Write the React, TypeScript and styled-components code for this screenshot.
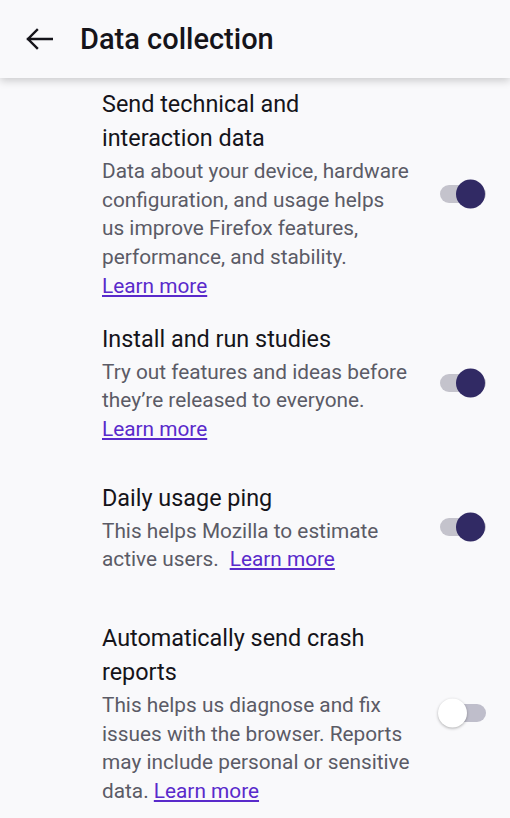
import { createGlobalStyle, styled } from "styled-components";

const Global = createGlobalStyle`
  html, body {
    margin: 0;
    padding: 0;
    background: #f9f9fb;
  }
  body {
    font-family: Roboto, "Noto Sans", sans-serif;
    color: #15141a;
  }
`;

const Screen = styled.div`
  width: 510px;
  min-height: 818px;
  background: #f9f9fb;
  display: flex;
  flex-direction: column;
`;

const Toolbar = styled.header`
  height: 78px;
  display: flex;
  align-items: center;
  gap: 27px;
  padding-left: 26px;
  background: #f9f9fb;
  box-shadow: 0 3px 8px rgba(0, 0, 0, 0.18);
  position: relative;
  z-index: 1;
`;

const BackButton = styled.button`
  border: none;
  background: none;
  padding: 0;
  width: 27px;
  height: 27px;
  display: flex;
  align-items: center;
  justify-content: center;
  color: #15141a;
`;

const Title = styled.h1`
  margin: 0;
  font-size: 29px;
  font-weight: 500;
  color: #15141a;
`;

const List = styled.div`
  display: flex;
  flex-direction: column;
  padding-top: 9px;
`;

const Row = styled.div<{ $after: number }>`
  display: flex;
  align-items: center;
  padding: 0 24px 0 102px;
  margin-bottom: ${(p) => p.$after}px;
`;

const Text = styled.div`
  width: 309px;
  flex: none;
`;

const Label = styled.div`
  font-size: 23.4px;
  line-height: 34px;
  color: #15141a;
`;

const Summary = styled.div`
  margin-top: 2px;
  font-size: 20.8px;
  line-height: 28.7px;
  color: #5b5b66;
`;

const Link = styled.a<{ $gap?: number }>`
  color: #592acb;
  text-decoration: underline;
  margin-left: ${(p) => p.$gap ?? 0}px;
  cursor: pointer;
`;

const Switch = styled.div<{ $on: boolean }>`
  margin-left: auto;
  width: 46px;
  height: 18px;
  border-radius: 9px;
  background: ${(p) => (p.$on ? "#c4c3cc" : "#bfbecb")};
  position: relative;
  flex: none;
`;

const Thumb = styled.div<{ $on: boolean }>`
  position: absolute;
  top: 50%;
  width: 29px;
  height: 29px;
  border-radius: 50%;
  transform: translateY(-50%);
  left: ${(p) => (p.$on ? "16px" : "-2px")};
  background: ${(p) => (p.$on ? "#312a64" : "#ffffff")};
  box-shadow: ${(p) =>
    p.$on ? "none" : "0 1px 3px rgba(0, 0, 0, 0.3)"};
`;

const Toggle = ({ on }: { on: boolean }) => (
  <Switch $on={on}>
    <Thumb $on={on} />
  </Switch>
);

export default function App() {
  return (
    <Screen>
      <Global />
      <Toolbar>
        <BackButton aria-label="Back">
          <svg width="27" height="22" viewBox="0 0 27 22" fill="none">
            <path
              d="M26 11H2M11 2L2 11l9 9"
              stroke="#15141a"
              strokeWidth="2.4"
              strokeLinecap="square"
            />
          </svg>
        </BackButton>
        <Title>Data collection</Title>
      </Toolbar>
      <List>
        <Row $after={21}>
          <Text>
            <Label>Send technical and interaction data</Label>
            <Summary>
              Data about your device, hardware configuration, and usage helps
              us improve Firefox features, performance, and stability.
              <br />
              <Link>Learn more</Link>
            </Summary>
          </Text>
          <Toggle on />
        </Row>
        <Row $after={37}>
          <Text>
            <Label>Install and run studies</Label>
            <Summary>
              Try out features and ideas before they’re released to everyone.
              <br />
              <Link>Learn more</Link>
            </Summary>
          </Text>
          <Toggle on />
        </Row>
        <Row $after={47}>
          <Text>
            <Label>Daily usage ping</Label>
            <Summary>
              This helps Mozilla to estimate active users.
              <Link $gap={11}>Learn more</Link>
            </Summary>
          </Text>
          <Toggle on />
        </Row>
        <Row $after={0}>
          <Text>
            <Label>Automatically send crash reports</Label>
            <Summary>
              This helps us diagnose and fix issues with the browser. Reports
              may include personal or sensitive data. <Link>Learn more</Link>
            </Summary>
          </Text>
          <Toggle on={false} />
        </Row>
      </List>
    </Screen>
  );
}
